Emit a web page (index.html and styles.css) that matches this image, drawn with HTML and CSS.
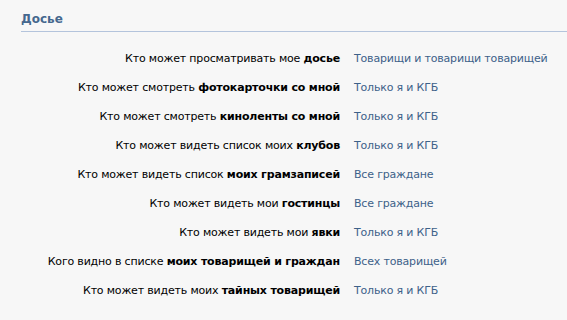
FILE: index.html
```html
<!DOCTYPE html>
<html lang="ru">
<head>
    <meta charset="UTF-8">
    <title>Досье</title>
    <link rel="stylesheet" href="styles.css">
</head>
<body>
    <div class="section">
        <h2 class="section-title">Досье</h2>
        <div class="settings">
            <div class="label">Кто может просматривать мое <b>досье</b></div>
            <div class="value">Товарищи и товарищи товарищей</div>

            <div class="label">Кто может смотреть <b>фотокарточки со мной</b></div>
            <div class="value">Только я и КГБ</div>

            <div class="label">Кто может смотреть <b>киноленты со мной</b></div>
            <div class="value">Только я и КГБ</div>

            <div class="label">Кто может видеть список моих <b>клубов</b></div>
            <div class="value">Только я и КГБ</div>

            <div class="label">Кто может видеть список <b>моих грамзаписей</b></div>
            <div class="value">Все граждане</div>

            <div class="label">Кто может видеть мои <b>гостинцы</b></div>
            <div class="value">Все граждане</div>

            <div class="label">Кто может видеть мои <b>явки</b></div>
            <div class="value">Только я и КГБ</div>

            <div class="label">Кого видно в списке <b>моих товарищей и граждан</b></div>
            <div class="value">Всех товарищей</div>

            <div class="label">Кто может видеть моих <b>тайных товарищей</b></div>
            <div class="value">Только я и КГБ</div>
        </div>
    </div>
</body>
</html>
```

FILE: styles.css
```css
body {
    margin: 0;
    background: #f7f7f7;
    font-family: "DejaVu Sans", Tahoma, sans-serif;
    font-size: 11px;
    color: #000;
}

.section {
    padding: 12px 0 0 21px;
}

.section-title {
    margin: 0;
    padding: 0 0 5px;
    font-size: 12px;
    line-height: 14px;
    font-weight: bold;
    color: #45688e;
    border-bottom: 1px solid #b4c4dc;
}

.settings {
    display: grid;
    grid-template-columns: 319px auto;
    column-gap: 14px;
    grid-auto-rows: 29px;
    align-items: center;
    margin-top: 12px;
    letter-spacing: -0.18px;
}

.label {
    text-align: right;
}

.value {
    color: #3d6189;
}
```
